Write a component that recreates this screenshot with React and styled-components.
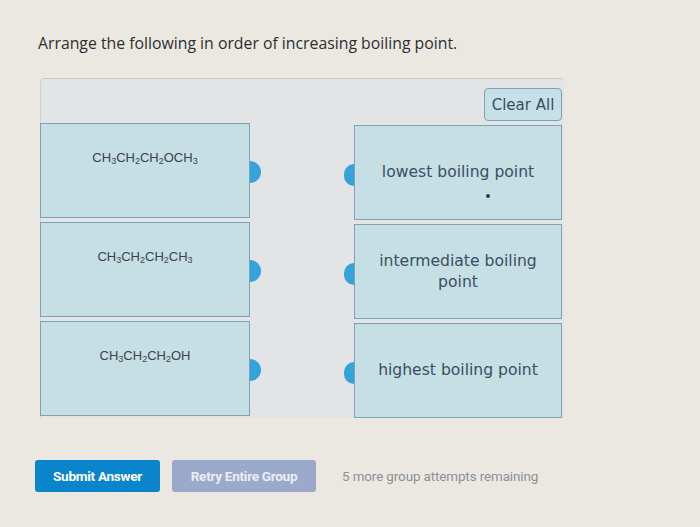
import React from 'react'
import styled, { createGlobalStyle } from 'styled-components'

const GlobalStyle = createGlobalStyle`
  html, body {
    margin: 0;
    padding: 0;
    background: #ebe8e1;
  }
`

const items = [
  ['CH', '3', 'CH', '2', 'CH', '2', 'OCH', '3'],
  ['CH', '3', 'CH', '2', 'CH', '2', 'CH', '3'],
  ['CH', '3', 'CH', '2', 'CH', '2', 'OH'],
]

const targets = ['lowest boiling point', 'intermediate boiling point', 'highest boiling point']

const Formula = ({ parts }) => (
  <span>
    {parts.map((p, i) => (i % 2 === 1 ? <sub key={i}>{p}</sub> : <span key={i}>{p}</span>))}
  </span>
)

const App = () => {
  return (
    <Page>
      <GlobalStyle />
      <Title>Arrange the following in order of increasing boiling point.</Title>
      <Panel>
        <Header>
          <ClearButton>Clear All</ClearButton>
        </Header>
        <Columns>
          <Column>
            {items.map((parts, i) => (
              <SourceBox key={i}>
                <Formula parts={parts} />
              </SourceBox>
            ))}
          </Column>
          <Column $offset>
            {targets.map((t, i) => (
              <TargetBox key={i}>
                <TargetLabel>{t}</TargetLabel>
                {i === 0 && <Dot />}
              </TargetBox>
            ))}
          </Column>
        </Columns>
      </Panel>
      <Footer>
        <Button $primary>Submit Answer</Button>
        <Button>Retry Entire Group</Button>
        <Attempts>5 more group attempts remaining</Attempts>
      </Footer>
    </Page>
  )
}

export default App

const Page = styled.div`
  width: 700px;
  height: 527px;
  box-sizing: border-box;
  padding: 31px 0 0 38px;
  background: #ebe8e1;
  overflow: hidden;
`

const Title = styled.h1`
  margin: 0;
  font-family: "Open Sans", sans-serif;
  font-weight: 400;
  font-size: 15.8px;
  line-height: 24px;
  color: #2e2e30;
`

const Panel = styled.div`
  margin: 23px 0 0 2px;
  width: 524px;
  height: 340px;
  box-sizing: border-box;
  background: #e3e4e6;
  border-top: 1px solid #c7c9cc;
  border-left: 1px solid #d0d2d4;
  border-radius: 4px 4px 0 0;
  display: flex;
  flex-direction: column;
`

const Header = styled.div`
  display: flex;
  justify-content: flex-end;
  padding: 9px 2px 2px 0;
`

const ClearButton = styled.button`
  width: 78px;
  height: 33px;
  background: #c6e0e8;
  border: 1px solid #7aa3b4;
  border-radius: 4px;
  font-family: "DejaVu Sans", Verdana, sans-serif;
  font-size: 15px;
  color: #3a4d60;
  padding: 0;
`

const Columns = styled.div`
  display: flex;
  justify-content: space-between;
  padding-right: 2px;
`

const Column = styled.div`
  display: flex;
  flex-direction: column;
  gap: 4px;
  width: ${p => (p.$offset ? '208px' : '210px')};
  margin-left: ${p => (p.$offset ? '0' : '-1px')};
  padding-top: ${p => (p.$offset ? '2px' : '0')};
`

const Box = styled.div`
  position: relative;
  height: 95px;
  box-sizing: border-box;
  background: #c5dfe5;
  border: 1px solid #79a4b6;
`

const SourceBox = styled(Box)`
  padding-top: 26px;
  text-align: center;
  font-family: "Liberation Sans", Arial, sans-serif;
  font-size: 13px;
  color: #3c4348;
  sub {
    font-size: 9px;
    vertical-align: -2px;
  }
  &::after {
    content: '';
    position: absolute;
    right: -12px;
    top: 50%;
    width: 11px;
    height: 22px;
    margin-top: -10px;
    background: #35a3db;
    border-radius: 0 11px 11px 0;
  }
`

const TargetBox = styled(Box)`
  display: flex;
  align-items: center;
  justify-content: center;
  padding: 0 14px;
  &::before {
    content: '';
    position: absolute;
    left: -11px;
    top: 50%;
    width: 10px;
    height: 22px;
    margin-top: -9px;
    background: #35a3db;
    border-radius: 11px 0 0 11px;
  }
`

const TargetLabel = styled.span`
  text-align: center;
  font-family: "DejaVu Sans", Verdana, sans-serif;
  font-size: 15.6px;
  line-height: 21px;
  color: #3b4e62;
`

const Dot = styled.span`
  position: absolute;
  left: 131px;
  top: 68px;
  width: 4px;
  height: 4px;
  border-radius: 50%;
  background: #33383c;
`

const Footer = styled.div`
  display: flex;
  align-items: center;
  margin: 42px 0 0 -3px;
  gap: 12px;
`

const Button = styled.button`
  height: 32px;
  padding: 0;
  width: ${p => (p.$primary ? '125px' : '144px')};
  border: none;
  border-radius: 3px;
  background: ${p => (p.$primary ? '#0a84cb' : '#9ba9ca')};
  color: ${p => (p.$primary ? '#ffffff' : '#e9edf5')};
  font-family: Roboto, "Liberation Sans", sans-serif;
  font-weight: 700;
  font-size: 13.6px;
  letter-spacing: -0.3px;
`

const Attempts = styled.span`
  margin-left: 14px;
  font-family: Roboto, "Liberation Sans", sans-serif;
  font-size: 13.4px;
  letter-spacing: -0.1px;
  color: #8a9096;
`
